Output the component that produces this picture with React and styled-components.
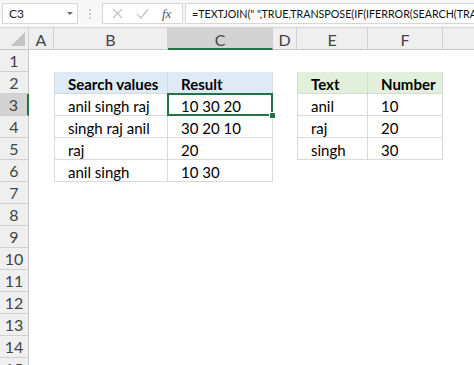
import React from 'react'
import styled, { createGlobalStyle, css } from 'styled-components'

const Global = createGlobalStyle`
  html, body {
    margin: 0;
    padding: 0;
    background: #fff;
    overflow: hidden;
  }
  body {
    font-family: Lato, "Open Sans", sans-serif;
  }
`

const green = '#217346'

const Page = styled.div`
  width: 474px;
  height: 365px;
  overflow: hidden;
  background: #fff;
`

const FormulaBar = styled.div`
  height: 28px;
  box-sizing: border-box;
  display: flex;
  align-items: center;
  padding: 3px 0 3px 2px;
  background: #f7f7f7;
  border-bottom: 1px solid #d4d4d4;
`

const Box = styled.div`
  height: 21px;
  box-sizing: border-box;
  border: 1px solid #d6d6d6;
  background: #fff;
  display: flex;
  align-items: center;
  font-size: 12px;
  color: #222;
  white-space: nowrap;
  overflow: hidden;
`

const NameBox = styled(Box)`
  width: 76px;
  padding-left: 6px;
  justify-content: space-between;
  padding-right: 4px;
`

const Caret = styled.span`
  width: 0;
  height: 0;
  border-left: 3px solid transparent;
  border-right: 3px solid transparent;
  border-top: 3px solid #666;
`

const Grip = styled.div`
  width: 24px;
  display: flex;
  flex-direction: column;
  align-items: center;
  gap: 2px;
  span {
    width: 2px;
    height: 2px;
    background: #c8c8c8;
  }
`

const IconBox = styled(Box)`
  width: 81px;
  justify-content: space-around;
  padding: 0 4px 0 2px;
`

const Fx = styled.span`
  font-family: "Liberation Serif", serif;
  font-style: italic;
  font-size: 13px;
  color: #555;
`

const FormulaBox = styled(Box)`
  flex: 1;
  margin-left: 2px;
  padding-left: 6px;
  border-right: none;
  font-size: 10.7px;
  color: #111;
`

const Sheet = styled.div`
  display: grid;
  grid-template-columns: 29px 25px 114px 105px 24px 71px 75px 40px;
  grid-auto-rows: 22px;
  font-size: 16px;
`

const headerBase = css`
  box-sizing: border-box;
  display: flex;
  align-items: center;
  justify-content: center;
  color: #444;
  background: ${p => (p.$active ? '#d3d3d3' : '#efefef')};
`

const ColHead = styled.div`
  ${headerBase}
  border-right: 1px solid #cfcfcf;
  border-bottom: ${p => (p.$active ? `2px solid ${green}` : '1px solid #c6c6c6')};
  padding-top: 2px;
`

const Corner = styled.div`
  box-sizing: border-box;
  background: #efefef;
  border-right: 1px solid #cfcfcf;
  border-bottom: 1px solid #c6c6c6;
  position: relative;
  &::after {
    content: '';
    position: absolute;
    right: 3px;
    bottom: 3px;
    border-left: 14px solid transparent;
    border-bottom: 14px solid #c2c2c2;
  }
`

const RowHead = styled.div`
  ${headerBase}
  border-bottom: 1px solid #d0d0d0;
  border-right: ${p => (p.$active ? `2px solid ${green}` : '1px solid #c6c6c6')};
`

const Cell = styled.div`
  box-sizing: border-box;
  display: flex;
  align-items: center;
  padding: 2px 0 0 13px;
  font-size: 15px;
  color: #000;
  white-space: nowrap;
  font-weight: ${p => (p.$bold ? 700 : 400)};
  background: ${p => p.$fill || '#fff'};
  ${p =>
    p.$boxed &&
    css`
      border-right: 1px solid #d9d9d9;
      border-bottom: 1px solid #d9d9d9;
      ${p.$left && 'border-left: 1px solid #d9d9d9;'}
    `}
  ${p =>
    p.$selected &&
    css`
      position: relative;
      &::before {
        content: '';
        position: absolute;
        left: -1px;
        top: -1px;
        right: -1px;
        bottom: -1px;
        border: 2px solid ${green};
      }
      &::after {
        content: '';
        position: absolute;
        right: -4px;
        bottom: -4px;
        width: 5px;
        height: 5px;
        background: ${green};
        border: 1px solid #fff;
      }
    `}
`

const blue = '#ddebf7'
const lightGreen = '#e2efda'

const leftTable = [
  ['Search values', 'Result'],
  ['anil singh raj', '10 30 20'],
  ['singh raj anil', '30 20 10'],
  ['raj', '20'],
  ['anil singh', '10 30'],
]

const rightTable = [
  ['Text', 'Number'],
  ['anil', '10'],
  ['raj', '20'],
  ['singh', '30'],
]

const columns = ['A', 'B', 'C', 'D', 'E', 'F', '']

const App = () => {
  const rows = []
  for (let r = 1; r <= 15; r++) {
    const cells = []
    const i = r - 2
    const lrow = i >= 0 && i < leftTable.length ? leftTable[i] : null
    const rrow = i >= 0 && i < rightTable.length ? rightTable[i] : null

    cells.push(<RowHead key="h" $active={r === 3}>{r}</RowHead>)
    cells.push(<Cell key="a" />)
    if (lrow) {
      cells.push(
        <Cell key="b" $boxed $left $bold={i === 0} $fill={i === 0 ? blue : null}>
          {lrow[0]}
        </Cell>
      )
      cells.push(
        <Cell key="c" $boxed $bold={i === 0} $fill={i === 0 ? blue : null} $selected={r === 3}>
          {lrow[1]}
        </Cell>
      )
    } else {
      cells.push(<Cell key="b" />, <Cell key="c" />)
    }
    cells.push(<Cell key="d" />)
    if (rrow) {
      cells.push(
        <Cell key="e" $boxed $left $bold={i === 0} $fill={i === 0 ? lightGreen : null}>
          {rrow[0]}
        </Cell>
      )
      cells.push(
        <Cell key="f" $boxed $bold={i === 0} $fill={i === 0 ? lightGreen : null}>
          {rrow[1]}
        </Cell>
      )
    } else {
      cells.push(<Cell key="e" />, <Cell key="f" />)
    }
    cells.push(<Cell key="g" />)
    rows.push(<React.Fragment key={r}>{cells}</React.Fragment>)
  }

  return (
    <Page>
      <Global />
      <FormulaBar>
        <NameBox>
          C3
          <Caret />
        </NameBox>
        <Grip>
          <span />
          <span />
          <span />
        </Grip>
        <IconBox>
          <svg width="11" height="11" viewBox="0 0 11 11">
            <path d="M1 1L10 10M10 1L1 10" stroke="#c4c4c4" strokeWidth="1.3" fill="none" />
          </svg>
          <svg width="13" height="11" viewBox="0 0 13 11">
            <path d="M1 6L5 10L12 1" stroke="#c4c4c4" strokeWidth="1.3" fill="none" />
          </svg>
          <Fx>fx</Fx>
        </IconBox>
        <FormulaBox>=TEXTJOIN(" ",TRUE,TRANSPOSE(IF(IFERROR(SEARCH(TRANSP</FormulaBox>
      </FormulaBar>
      <Sheet>
        <Corner />
        {columns.map((c, i) => (
          <ColHead key={i} $active={c === 'C'}>
            {c}
          </ColHead>
        ))}
        {rows}
      </Sheet>
    </Page>
  )
}

export default App
